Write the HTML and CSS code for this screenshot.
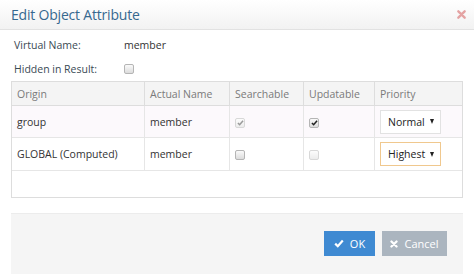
FILE: index.html
```html
<!DOCTYPE html>
<html lang="en">

<head>
  <meta charset="UTF-8">
  <meta name="viewport" content="width=device-width, initial-scale=1.0">
  <title>Edit Object Attribute</title>
  <link rel="stylesheet" href="styles.css">
</head>

<body>
  <div class="modal">
    <!-- Header -->
    <div class="modal-header">
      <h4 class="modal-title">Edit Object Attribute</h4>
      <span class="close">
        <svg width="9" height="9" viewBox="0 0 10 10"><path d="M1.5 1.5 L8.5 8.5 M8.5 1.5 L1.5 8.5" stroke="#e4a3a3" stroke-width="2.6" stroke-linecap="round"/></svg>
      </span>
    </div>

    <!-- Body -->
    <div class="modal-body">
      <div class="field">
        <label>Virtual Name:</label>
        <span>member</span>
      </div>
      <div class="field">
        <label>Hidden in Result:</label>
        <span class="check"></span>
      </div>

      <div class="grid-box">
        <table class="attr-table">
          <thead>
            <tr>
              <th class="col-origin">Origin</th>
              <th class="col-name">Actual Name</th>
              <th class="col-search">Searchable</th>
              <th class="col-update">Updatable</th>
              <th>Priority</th>
            </tr>
          </thead>
          <tbody>
            <tr class="odd">
              <td>group</td>
              <td>member</td>
              <td><span class="check checked disabled"><svg width="7" height="6" viewBox="0 0 8 7"><path d="M1 3.5 L3 5.5 L7 1" fill="none" stroke="#9a9a9a" stroke-width="1.8"/></svg></span></td>
              <td><span class="check checked"><svg width="7" height="6" viewBox="0 0 8 7"><path d="M1 3.5 L3 5.5 L7 1" fill="none" stroke="#222" stroke-width="1.8"/></svg></span></td>
              <td>
                <div class="select">Normal <span class="caret"></span></div>
              </td>
            </tr>
            <tr>
              <td>GLOBAL (Computed)</td>
              <td>member</td>
              <td><span class="check"></span></td>
              <td><span class="check disabled"></span></td>
              <td>
                <div class="select focus">Highest <span class="caret"></span></div>
              </td>
            </tr>
          </tbody>
        </table>
      </div>
    </div>

    <!-- Footer -->
    <div class="modal-footer">
      <button class="btn btn-primary">
        <svg width="10" height="9" viewBox="0 0 10 9"><path d="M1.2 4.6 L3.8 7.2 L8.8 1.6" fill="none" stroke="#fff" stroke-width="2.2"/></svg>
        OK
      </button>
      <button class="btn btn-cancel">
        <svg width="8" height="8" viewBox="0 0 10 10"><path d="M1.8 1.8 L8.2 8.2 M8.2 1.8 L1.8 8.2" stroke="#fff" stroke-width="2.8" stroke-linecap="round"/></svg>
        Cancel
      </button>
    </div>
  </div>
</body>

</html>
```

FILE: styles.css
```css
body {
  margin: 0;
  font-family: 'Open Sans', sans-serif;
  font-size: 10.5px;
  color: #333;
  background: #fff;
}

.modal {
  width: 474px;
  height: 274px;
  overflow: hidden;
}

.modal-header {
  height: 29px;
  display: flex;
  align-items: center;
  justify-content: space-between;
  padding: 0 11px;
  background: linear-gradient(to bottom, #ffffff, #f2f2f2);
  border-bottom: 1px solid #e2e2e2;
}

.modal-title {
  margin: 0;
  font-size: 14px;
  font-weight: normal;
  color: #36688f;
  letter-spacing: -0.2px;
}

.close {
  display: flex;
  margin-right: -3px;
}

.modal-body {
  padding: 3px 11px 0;
}

.field {
  display: flex;
  align-items: center;
  height: 24px;
  padding-left: 3px;
  color: #3a4a55;
}

.field label {
  width: 110px;
}

.field span {
  color: #333;
}

.check {
  display: inline-flex;
  align-items: center;
  justify-content: center;
  width: 8px;
  height: 8px;
  border: 1px solid #b5b5b5;
  border-radius: 2px;
  background: linear-gradient(to bottom, #fafafa, #dcdcdc);
  vertical-align: middle;
}

.check.disabled {
  border-color: #d8d8d8;
  background: linear-gradient(to bottom, #fcfcfc, #ececec);
}

.grid-box {
  height: 115px;
  border: 1px solid #dddddd;
}

.attr-table {
  width: 100%;
  border-collapse: collapse;
}

.attr-table th {
  height: 23px;
  padding: 0 5px;
  text-align: left;
  font-weight: normal;
  color: #7a7a7a;
  background: #f4f4f4;
  border-bottom: 1px solid #dddddd;
  border-right: 1px solid #dddddd;
}

.attr-table td {
  height: 31px;
  padding: 0 5px;
  border-right: 1px solid #e6e6e6;
  border-bottom: 1px solid #e6e6e6;
}

.attr-table tr:last-child td {
  height: 32px;
}

.attr-table th:last-child,
.attr-table td:last-child {
  border-right: none;
}

.attr-table tr.odd td {
  background: #fcf9fc;
}

.col-origin {
  width: 122px;
}

.col-name {
  width: 74px;
}

.col-search {
  width: 63px;
}

.col-update {
  width: 60px;
}

.select {
  box-sizing: border-box;
  display: flex;
  align-items: center;
  justify-content: space-between;
  width: 61px;
  height: 24px;
  padding: 0 6px 0 7px;
  border: 1px solid #e2e2e2;
  background: #fff;
  font-size: 10.5px;
  color: #222;
}

.select.focus {
  border-color: #f0c88e;
}

.caret {
  width: 0;
  height: 0;
  border-left: 2.5px solid transparent;
  border-right: 2.5px solid transparent;
  border-top: 5px solid #222;
}

.modal-footer {
  margin: 15px 11px 0;
  height: 60px;
  padding: 17px 16px 0 0;
  background: #f5f5f5;
  border-top: 1px solid #ececec;
  display: flex;
  justify-content: flex-end;
  align-items: flex-start;
  gap: 7px;
}

.btn {
  display: flex;
  align-items: center;
  justify-content: center;
  gap: 6px;
  height: 25px;
  border: none;
  border-radius: 0;
  font-family: 'Open Sans', sans-serif;
  font-size: 11px;
  color: #fff;
}

.btn-primary {
  width: 51px;
  background: #3f8ad2;
}

.btn-cancel {
  width: 65px;
  background: #abb5bf;
}
```
